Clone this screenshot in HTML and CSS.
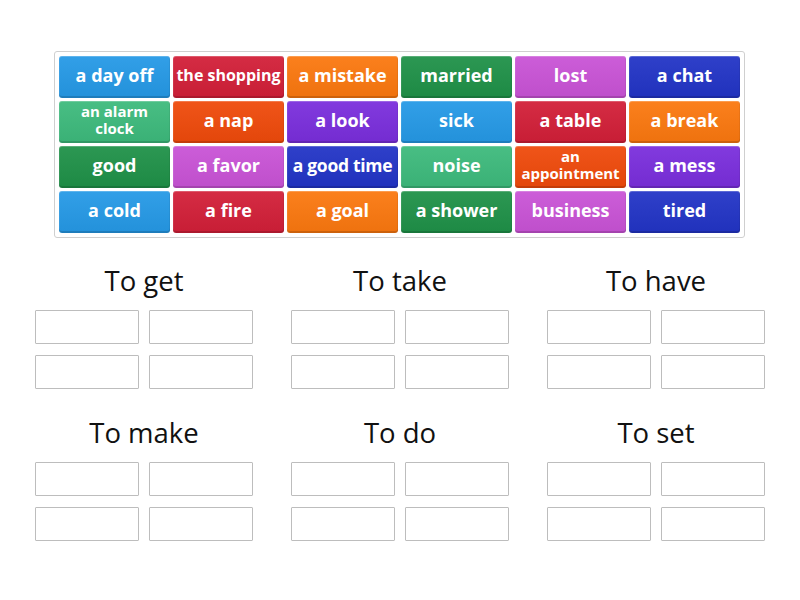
FILE: index.html
```html
<!DOCTYPE html>
<html>
<head>
<meta charset="utf-8">
<link rel="stylesheet" href="styles.css">
</head>
<body>
<div class="bank">
  <div class="tile c-blue">a day off</div>
  <div class="tile c-red sm">the shopping</div>
  <div class="tile c-orange">a mistake</div>
  <div class="tile c-dgreen">married</div>
  <div class="tile c-pink">lost</div>
  <div class="tile c-navy">a chat</div>

  <div class="tile c-lgreen xs narrow">an alarm clock</div>
  <div class="tile c-vermil">a nap</div>
  <div class="tile c-purple">a look</div>
  <div class="tile c-blue">sick</div>
  <div class="tile c-red">a table</div>
  <div class="tile c-orange">a break</div>

  <div class="tile c-dgreen">good</div>
  <div class="tile c-pink">a favor</div>
  <div class="tile c-navy tight">a good time</div>
  <div class="tile c-lgreen">noise</div>
  <div class="tile c-vermil xs">an appointment</div>
  <div class="tile c-purple">a mess</div>

  <div class="tile c-blue">a cold</div>
  <div class="tile c-red">a fire</div>
  <div class="tile c-orange">a goal</div>
  <div class="tile c-dgreen">a shower</div>
  <div class="tile c-pink">business</div>
  <div class="tile c-navy">tired</div>
</div>

<div class="groups">
  <div class="group">
    <div class="title">To get</div>
    <div class="slots"><div class="slot"></div><div class="slot"></div><div class="slot"></div><div class="slot"></div></div>
  </div>
  <div class="group">
    <div class="title">To take</div>
    <div class="slots"><div class="slot"></div><div class="slot"></div><div class="slot"></div><div class="slot"></div></div>
  </div>
  <div class="group">
    <div class="title">To have</div>
    <div class="slots"><div class="slot"></div><div class="slot"></div><div class="slot"></div><div class="slot"></div></div>
  </div>
  <div class="group">
    <div class="title">To make</div>
    <div class="slots"><div class="slot"></div><div class="slot"></div><div class="slot"></div><div class="slot"></div></div>
  </div>
  <div class="group">
    <div class="title">To do</div>
    <div class="slots"><div class="slot"></div><div class="slot"></div><div class="slot"></div><div class="slot"></div></div>
  </div>
  <div class="group">
    <div class="title">To set</div>
    <div class="slots"><div class="slot"></div><div class="slot"></div><div class="slot"></div><div class="slot"></div></div>
  </div>
</div>
</body>
</html>
```

FILE: styles.css
```css
html, body {
  margin: 0;
  padding: 0;
  background: #ffffff;
}
body {
  font-family: "Open Sans", "Liberation Sans", sans-serif;
  width: 800px;
  height: 600px;
  overflow: hidden;
}
.bank {
  box-sizing: border-box;
  margin: 51px 0 0 54px;
  width: 691px;
  height: 187px;
  padding: 4px;
  border: 1px solid #cfcfcf;
  border-radius: 3px;
  display: grid;
  grid-template-columns: repeat(6, 111px);
  grid-template-rows: repeat(4, 42px);
  gap: 3px;
}
.tile {
  box-sizing: border-box;
  border-radius: 3px;
  color: #ffffff;
  font-weight: 700;
  font-size: 18px;
  line-height: 20px;
  display: flex;
  align-items: center;
  justify-content: center;
  text-align: center;
  padding: 0 2px 4px;
  box-shadow: inset 0 1px 0 rgba(255,255,255,0.22), inset 0 -2px 0 rgba(0,0,0,0.14), inset 1px 0 0 rgba(255,255,255,0.08), inset -1px 0 0 rgba(0,0,0,0.06);
  background-image: linear-gradient(to bottom, rgba(255,255,255,0.06), rgba(0,0,0,0.05));
}
.tile.sm { font-size: 16px; }
.tile.xs { font-size: 15px; line-height: 17px; }
.tile.narrow { padding: 0 18px 4px; }
.tile.tight { font-size: 17.5px; letter-spacing: -0.3px; }

.c-blue { background-color: #2599e6; }
.c-red { background-color: #d21f38; }
.c-orange { background-color: #fb780f; }
.c-dgreen { background-color: #1f9148; }
.c-pink { background-color: #c953d6; }
.c-navy { background-color: #2234c6; }
.c-lgreen { background-color: #3dba7c; }
.c-vermil { background-color: #ef4a0b; }
.c-purple { background-color: #7a2edc; }

.groups {
  margin: 23px 0 0 35px;
  display: grid;
  grid-template-columns: repeat(3, 218px);
  column-gap: 38px;
  row-gap: 24px;
}
.group {
  display: flex;
  flex-direction: column;
}
.title {
  font-size: 27.5px;
  line-height: 36px;
  padding-top: 2px;
  color: #111111;
  text-align: center;
  margin-bottom: 11px;
}
.slots {
  display: grid;
  grid-template-columns: 104px 104px;
  column-gap: 10px;
  row-gap: 11px;
}
.slot {
  box-sizing: border-box;
  height: 34px;
  border: 1px solid #bdbdbd;
  border-radius: 1px;
  background: #ffffff;
}
```
